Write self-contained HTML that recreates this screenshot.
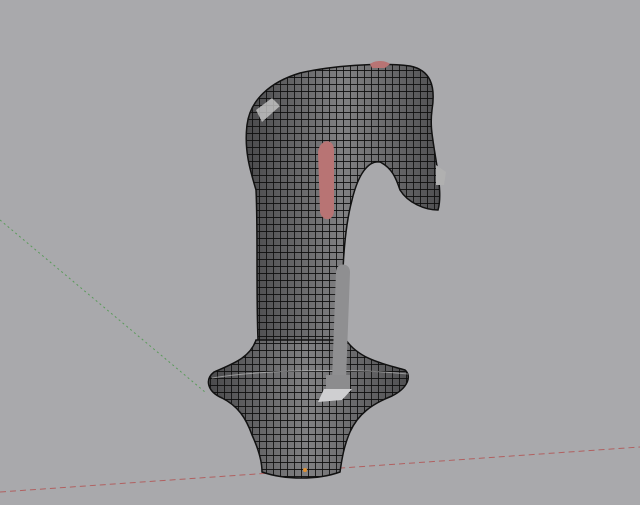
<!DOCTYPE html>
<html><head><style>html,body{margin:0;padding:0;background:#a9a9ac;overflow:hidden}</style></head>
<body>
<svg width="640" height="500" viewBox="0 0 640 500" xmlns="http://www.w3.org/2000/svg">
<defs>
<linearGradient id="g" x1="0" y1="0" x2="1" y2="0">
<stop offset="0" stop-color="#4a4a4c"/><stop offset="0.5" stop-color="#808082"/><stop offset="1" stop-color="#505052"/>
</linearGradient>
<pattern id="p" width="7" height="7" patternUnits="userSpaceOnUse">
<path d="M0 0H7M0 0V7" stroke="#0d0d0d" stroke-width="1.7" fill="none"/>
</pattern>
</defs>
<rect width="640" height="500" fill="#a9a9ac"/>
<line x1="0" y1="220" x2="205" y2="392" stroke="#5a9a5a" stroke-width="1" stroke-dasharray="2,3"/>
<line x1="0" y1="492" x2="640" y2="447" stroke="#b06060" stroke-width="1" stroke-dasharray="6,4"/>
<g>
<path d="M258 340 C256 290 258 230 256 190 C250 170 244 150 247 125 C250 100 270 82 300 73 C330 66 380 62 410 66 C430 70 436 85 432 110 C430 125 432 135 436 160 C440 185 441 200 438 210 C425 210 408 203 400 190 C396 178 392 168 380 162 C368 160 358 175 352 200 C344 230 340 280 344 350 L258 350 Z" fill="url(#g)"/>
<path d="M258 340 C256 290 258 230 256 190 C250 170 244 150 247 125 C250 100 270 82 300 73 C330 66 380 62 410 66 C430 70 436 85 432 110 C430 125 432 135 436 160 C440 185 441 200 438 210 C425 210 408 203 400 190 C396 178 392 168 380 162 C368 160 358 175 352 200 C344 230 340 280 344 350 L258 350 Z" fill="url(#p)" stroke="#111" stroke-width="1.5"/>
<path d="M256 340 C250 358 232 364 214 372 C204 380 208 392 222 398 C238 406 246 418 252 435 C258 448 262 460 262 472 C285 480 318 480 340 472 C342 458 344 446 350 432 C358 414 372 404 392 396 C408 388 412 376 405 370 C385 364 360 360 346 340 Z" fill="url(#g)"/>
<path d="M256 340 C250 358 232 364 214 372 C204 380 208 392 222 398 C238 406 246 418 252 435 C258 448 262 460 262 472 C285 480 318 480 340 472 C342 458 344 446 350 432 C358 414 372 404 392 396 C408 388 412 376 405 370 C385 364 360 360 346 340 Z" fill="url(#p)" stroke="#111" stroke-width="1.5"/>
<path d="M212 378 C260 370 350 368 408 374" stroke="#ddd" stroke-width="1" fill="none" opacity="0.5"/>
</g>
<path d="M318 152 C320 138 334 138 334 150 L334 210 C334 222 322 222 320 212 Z" fill="#b87474"/>
<path d="M370 64 C375 60 385 60 390 64 L385 68 L372 68 Z" fill="#b87474"/>
<path d="M256 110 L272 98 L280 106 L262 122 Z" fill="#c8c8c8" opacity="0.8"/>
<path d="M436 165 L446 172 L444 185 L436 185 Z" fill="#b0b0b0"/>
<path d="M336 272 C336 262 350 262 350 272 L346 380 L332 380 Z" fill="#8f8f91"/>
<rect x="326" y="375" width="24" height="14" fill="#8c8c8e"/>
<path d="M324 389 L352 389 L342 400 L318 402 Z" fill="#cfcfd1"/>
<circle cx="305" cy="470" r="2" fill="#e09030"/>
</svg>
</body></html>
